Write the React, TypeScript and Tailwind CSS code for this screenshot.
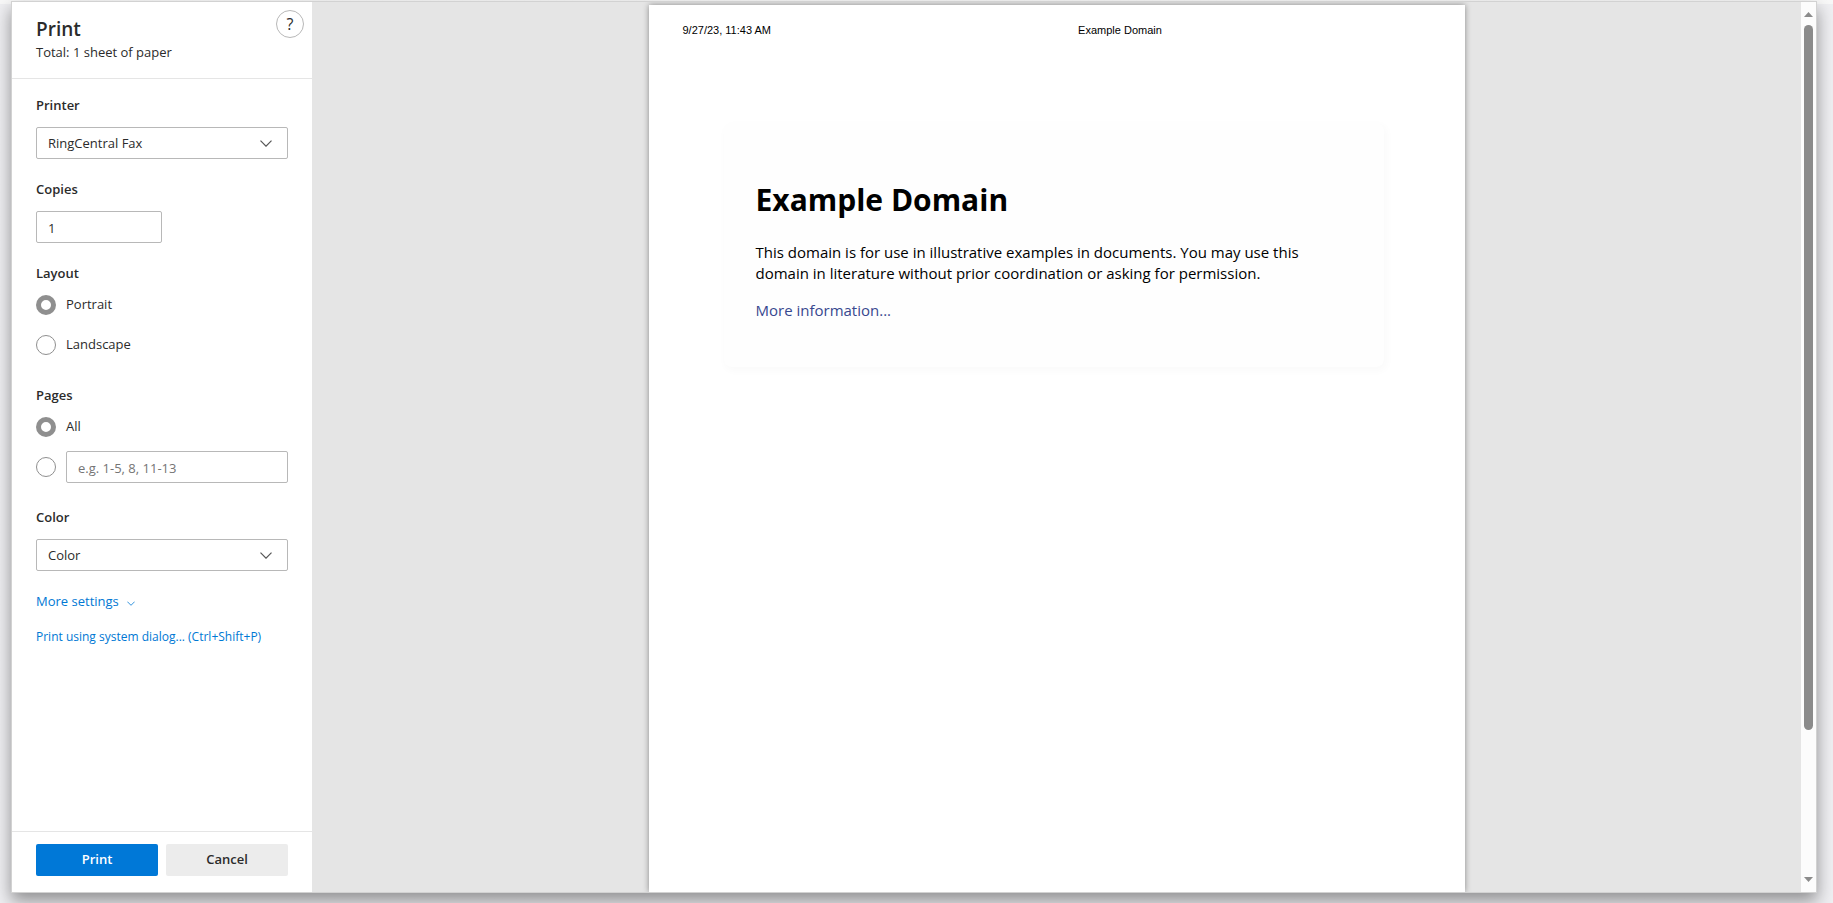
import { useState } from 'react';

const fieldClass =
  'h-8 rounded-xs border border-[#b8b8b8] bg-white px-[11px] text-[13px] text-[#2b2b2b] outline-none focus:border-[#0078d4]';

const radioClass =
  'h-5 w-5 shrink-0 appearance-none rounded-full border border-[#8f8f8f] bg-white checked:border-[5px]';

function Chevron({ className }: { className: string }) {
  return (
    <svg className={className} viewBox="0 0 12 7" fill="none" stroke="currentColor" strokeWidth="1.2">
      <path d="M0.5 0.7 6 6.2 11.5 0.7" />
    </svg>
  );
}

function SelectField({ id, label, options }: { id: string; label: string; options: string[] }) {
  return (
    <div className="flex flex-col gap-3">
      <label htmlFor={id} className="text-[13px] leading-5 font-semibold">{label}</label>
      <div className="relative">
        <select id={id} className={`${fieldClass} w-full appearance-none pt-px`}>
          {options.map(option => (
            <option key={option}>{option}</option>
          ))}
        </select>
        <Chevron className="pointer-events-none absolute top-[13px] right-4 h-[7px] w-3 text-[#555]" />
      </div>
    </div>
  );
}

export default function App() {
  const [copies, setCopies] = useState('1');
  const [layout, setLayout] = useState('portrait');
  const [pages, setPages] = useState('all');
  const [range, setRange] = useState('');

  return (
    <div className="h-screen overflow-hidden bg-linear-to-b from-[#f8f8f8] from-[4px] to-[#efeff2] to-[4px] px-[11px] pt-px pb-[10px] font-['Open_Sans',sans-serif] text-[13px] text-[#2b2b2b]">
      <div className="mr-[5px] flex h-full border border-[#d2d2d2] bg-[#e5e5e5] shadow-[0_8px_16px_rgba(0,0,0,0.4)]">
        {/* Settings */}
        <aside className="flex w-[300px] shrink-0 flex-col bg-white">
          <header className="flex h-[77px] items-start justify-between border-b border-[#e5e5e5] pt-2 pr-2 pl-6">
            <div className="pt-1">
              <h1 className="text-[19px] leading-[30px] font-semibold">Print</h1>
              <p className="leading-4">Total: 1 sheet of paper</p>
            </div>
            <button
              aria-label="Help"
              className="flex h-7 w-7 items-center justify-center rounded-full border border-[#b8b8b8] text-base"
            >
              ?
            </button>
          </header>

          <div className="flex flex-1 flex-col gap-5 overflow-hidden px-6 pt-4">
            <SelectField id="printer" label="Printer" options={['RingCentral Fax']} />

            <div className="flex flex-col gap-3">
              <label htmlFor="copies" className="leading-5 font-semibold">Copies</label>
              <input
                id="copies"
                value={copies}
                onChange={e => setCopies(e.target.value)}
                className={`${fieldClass} w-1/2 pt-px`}
              />
            </div>

            <fieldset>
              <legend className="mb-[2px] leading-5 font-semibold">Layout</legend>
              <label className="flex h-10 items-center gap-[10px]">
                <input
                  type="radio"
                  name="layout"
                  checked={layout === 'portrait'}
                  onChange={() => setLayout('portrait')}
                  className={radioClass}
                />
                Portrait
              </label>
              <label className="flex h-10 items-center gap-[10px]">
                <input
                  type="radio"
                  name="layout"
                  checked={layout === 'landscape'}
                  onChange={() => setLayout('landscape')}
                  className={radioClass}
                />
                Landscape
              </label>
            </fieldset>

            <fieldset>
              <legend className="mb-[2px] leading-5 font-semibold">Pages</legend>
              <label className="flex h-10 items-center gap-[10px]">
                <input
                  type="radio"
                  name="pages"
                  checked={pages === 'all'}
                  onChange={() => setPages('all')}
                  className={radioClass}
                />
                All
              </label>
              <div className="flex h-10 items-center gap-[10px]">
                <input
                  type="radio"
                  name="pages"
                  aria-label="Custom pages"
                  checked={pages === 'custom'}
                  onChange={() => setPages('custom')}
                  className={radioClass}
                />
                <input
                  aria-label="Page range"
                  placeholder="e.g. 1-5, 8, 11-13"
                  value={range}
                  onFocus={() => setPages('custom')}
                  onChange={e => setRange(e.target.value)}
                  className={`${fieldClass} min-w-0 flex-1 pt-px placeholder:text-[#757575]`}
                />
              </div>
            </fieldset>

            <SelectField id="color" label="Color" options={['Color', 'Black and white']} />

            <div className="flex flex-col items-start gap-4 text-[#0078d4]">
              <button className="flex items-center gap-2 leading-5">
                More settings
                <Chevron className="mt-1 h-[5px] w-2" />
              </button>
              <a href="#system-dialog" className="text-xs leading-5">
                Print using system dialog... (Ctrl+Shift+P)
              </a>
            </div>
          </div>

          <footer className="flex h-[61px] gap-2 border-t border-[#e5e5e5] px-6 pt-3">
            <button className="h-8 flex-1 rounded-xs bg-[#0078d7] font-semibold text-white">Print</button>
            <button className="h-8 flex-1 rounded-xs bg-[#ececec] font-semibold">Cancel</button>
          </footer>
        </aside>

        {/* Preview */}
        <main className="flex min-w-0 flex-1 justify-center overflow-hidden pt-[3px]">
          <article className="w-[816px] bg-white px-[34px] pt-[18px] text-black shadow-[0_0_6px_rgba(0,0,0,0.4)]">
            <div className="grid grid-cols-[1fr_auto_1fr] font-['Liberation_Sans',sans-serif] text-[11px] leading-[14px]">
              <span>9/27/23, 11:43 AM</span>
              <span className="pl-[127px]">Example Domain</span>
            </div>
            <section className="mr-[47px] ml-[41px] mt-[86px] h-[244px] rounded-lg bg-[#fefefe] px-8 pt-[57px] shadow-[2px_3px_7px_2px_rgba(0,0,0,0.02)]">
              <h2 className="text-[30px] leading-10 font-bold">Example Domain</h2>
              <p className="mt-[22px] max-w-[560px] text-[15px] leading-[21px]">
                This domain is for use in illustrative examples in documents. You may use this domain in literature
                without prior coordination or asking for permission.
              </p>
              <a href="#more" className="mt-4 block text-[15px] leading-[21px] text-[#38488f]">
                More information...
              </a>
            </section>
          </article>
        </main>

        {/* Scrollbar */}
        <div className="flex w-[15px] shrink-0 flex-col items-center bg-[#fcfcfc] pt-[10px] pb-[10px]">
          <button aria-label="Scroll up" className="text-[#8b8b8b]">
            <svg className="block h-[5px] w-[9px]" viewBox="0 0 9 5" fill="currentColor">
              <path d="M4.5 0 9 5H0z" />
            </svg>
          </button>
          <div className="mt-2 mb-2 w-[9px] flex-1">
            <div className="h-[83.5%] rounded-full bg-[#8b8b8b]" />
          </div>
          <button aria-label="Scroll down" className="text-[#8b8b8b]">
            <svg className="block h-[5px] w-[9px]" viewBox="0 0 9 5" fill="currentColor">
              <path d="M0 0h9L4.5 5z" />
            </svg>
          </button>
        </div>
      </div>
    </div>
  );
}
